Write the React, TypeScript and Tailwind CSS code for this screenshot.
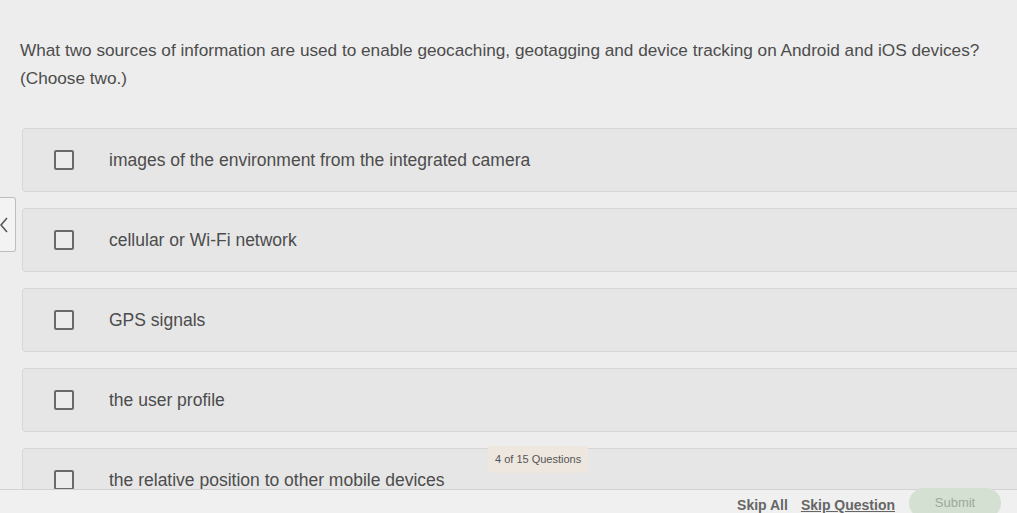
import React from "react";

const options = [
  "images of the environment from the integrated camera",
  "cellular or Wi-Fi network",
  "GPS signals",
  "the user profile",
  "the relative position to other mobile devices",
];

export default function App() {
  return (
    <div
      className="relative w-[1017px] h-[513px] overflow-hidden bg-[#ededed] text-[#4c4c4c]"
      style={{ fontFamily: '"Liberation Sans", Arial, sans-serif' }}
    >
      <div className="pt-[36px] pl-[20px] pr-[10px] text-[17.2px] leading-[28px]">
        <p>What two sources of information are used to enable geocaching, geotagging and device tracking on Android and iOS devices?</p>
        <p>(Choose two.)</p>
      </div>

      <div className="mt-[36px] ml-[22px] flex flex-col gap-[16px]">
        {options.map((o) => (
          <div
            key={o}
            className="flex items-center h-[64px] -mr-[10px] rounded-[4px] border border-[#d6d6d6] bg-[#e6e6e6]"
          >
            <span className="ml-[31px] w-[20px] h-[20px] border-2 border-[#6a6a6a] rounded-[2px] bg-[#ececec] shrink-0" />
            <span className="ml-[35px] text-[17.5px]">{o}</span>
          </div>
        ))}
      </div>

      <div className="absolute left-0 top-[197px] w-[16px] h-[55px] bg-[#f3f3f3] border border-l-0 border-[#bdbdbd] rounded-r-[3px] flex items-center">
        <svg width="10" height="18" viewBox="0 0 10 18" className="-ml-[1px]">
          <path d="M8 2 L2 9 L8 16" fill="none" stroke="#555" strokeWidth="1.6" />
        </svg>
      </div>

      <div className="absolute left-[488px] top-[446px] px-[7px] py-[5px] bg-[#ede7df] text-[11px] text-[#555]">
        4 of 15 Questions
      </div>

      <div className="absolute left-0 right-0 bottom-0 top-[489px] bg-[#f0f0f0] border-t border-[#d2d2d2] flex items-start justify-end pr-[16px]">
        <span className="mt-[6px] text-[14px] leading-[18px] font-bold text-[#666]">Skip All</span>
        <span className="mt-[6px] ml-[13px] text-[14px] leading-[18px] font-bold text-[#666] underline">Skip Question</span>
        <span className="ml-[14px] -mt-[2px] w-[92px] h-[30px] rounded-full bg-[#d4e0d1] text-[#9caa9c] text-[13px] flex items-center justify-center">
          Submit
        </span>
      </div>
    </div>
  );
}
